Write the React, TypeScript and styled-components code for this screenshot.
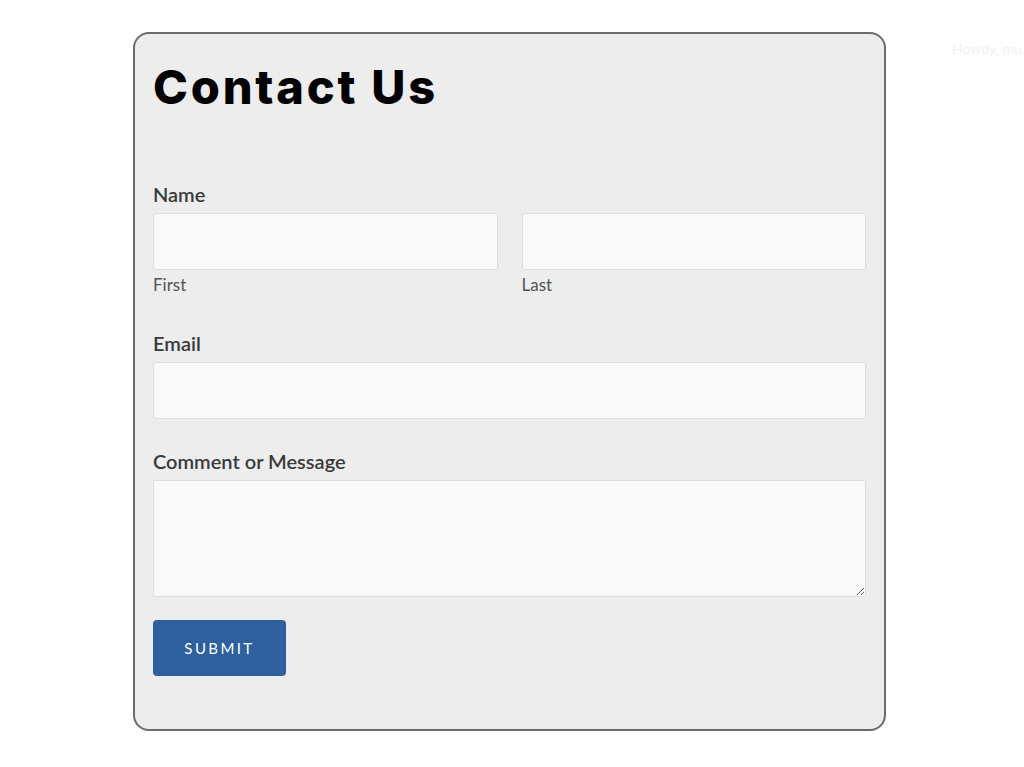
import styled, { createGlobalStyle } from "styled-components";

const GlobalStyle = createGlobalStyle`
  html, body {
    margin: 0;
    padding: 0;
    background: #ffffff;
    overflow: hidden;
  }
  body {
    font-family: "Lato", "Liberation Sans", sans-serif;
  }
  * {
    box-sizing: border-box;
  }
`;

export default function App() {
  return (
    <>
      <GlobalStyle />
      <Page>
        <Howdy>Howdy, mu</Howdy>
        <Card>
          <Title>Contact Us</Title>
          <Form onSubmit={(e) => e.preventDefault()}>
            <Field>
              <Label>Name</Label>
              <Split>
                <div>
                  <Input type="text" />
                  <SubLabel>First</SubLabel>
                </div>
                <div>
                  <Input type="text" />
                  <SubLabel>Last</SubLabel>
                </div>
              </Split>
            </Field>

            <Field $gap={35}>
              <Label>Email</Label>
              <Input type="email" />
            </Field>

            <Field $gap={30}>
              <Label>Comment or Message</Label>
              <TextArea />
            </Field>

            <SubmitButton type="submit">Submit</SubmitButton>
          </Form>
        </Card>
      </Page>
    </>
  );
}

const Page = styled.div`
  position: relative;
  width: 1024px;
  height: 767px;
  padding: 32px 0 0 133px;
`;

// admin bar greeting peeking in at the top right, clipped by the window edge
const Howdy = styled.span`
  position: absolute;
  top: 40px;
  left: 952px;
  white-space: nowrap;
  font-size: 14px;
  color: #f1f1f1;
`;

const Card = styled.div`
  width: 753px;
  height: 699px;
  background: #ededed;
  border: 2px solid #6b6b6b;
  border-radius: 16px;
  padding: 25px 18px 0;
`;

const Title = styled.h1`
  margin: 0;
  font-family: "Inter", "Liberation Sans", sans-serif;
  font-weight: 800;
  font-size: 47px;
  line-height: 1.2;
  letter-spacing: 2.8px;
  color: #000000;
`;

const Form = styled.form`
  margin-top: 67px;
  display: flex;
  flex-direction: column;
  align-items: flex-start;
`;

const Field = styled.div<{ $gap?: number }>`
  width: 100%;
  margin-top: ${(p) => p.$gap ?? 0}px;
`;

const Label = styled.label`
  display: block;
  font-size: 20px;
  line-height: 25px;
  font-weight: 600;
  color: #3a3a3a;
  margin-bottom: 6px;
`;

const Split = styled.div`
  display: grid;
  grid-template-columns: 1fr 1fr;
  column-gap: 24px;
`;

const Input = styled.input`
  display: block;
  width: 100%;
  height: 57px;
  background: #f9f9f9;
  border: 1px solid #dddddd;
  border-radius: 2px;
  outline: none;
  padding: 0 12px;
  font-family: inherit;
  font-size: 16px;
`;

const SubLabel = styled.div`
  margin-top: 4px;
  font-size: 17px;
  line-height: 22px;
  color: #555555;
`;

const TextArea = styled.textarea`
  display: block;
  width: 100%;
  height: 117px;
  background: #f9f9f9;
  border: 1px solid #dddddd;
  border-radius: 2px;
  outline: none;
  padding: 12px;
  font-family: inherit;
  font-size: 16px;
  resize: vertical;
`;

const SubmitButton = styled.button`
  margin-top: 23px;
  width: 133px;
  height: 56px;
  background: #2e5f9f;
  border: none;
  border-radius: 4px;
  color: #ffffff;
  font-family: "Lato", "Liberation Sans", sans-serif;
  font-size: 15px;
  letter-spacing: 2.4px;
  text-transform: uppercase;
  cursor: pointer;
`;
